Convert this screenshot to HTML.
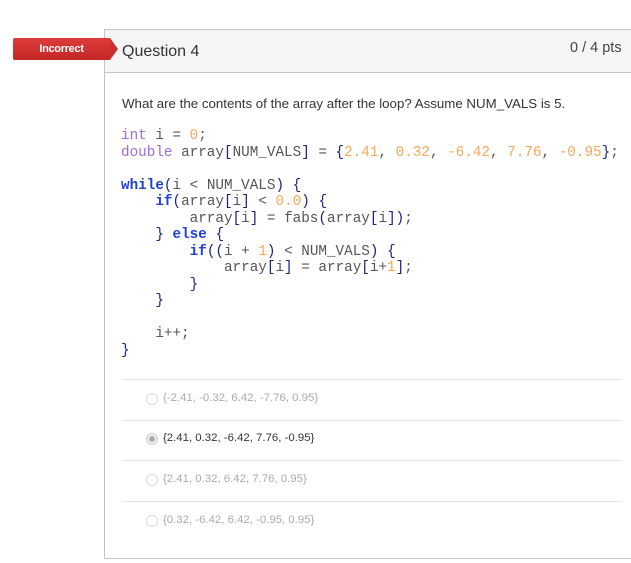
<!DOCTYPE html>
<html><head><style>
body{margin:0;width:631px;height:563px;background:#fff;position:relative;overflow:hidden;font-family:"Liberation Sans",sans-serif;}
.box{position:absolute;left:104px;top:29px;width:540px;height:528px;border:1px solid #c4c4c4;border-right:none;}
.hdr{position:absolute;left:0;top:0;right:0;height:42px;background:#f5f5f5;border-bottom:1px solid #c4c4c4;}
.tag{position:absolute;left:13px;top:38px;width:97px;height:22px;background:linear-gradient(#dc3b3b,#c42727);color:#fff;font-size:11px;font-weight:bold;line-height:22px;text-align:center;border-radius:2px 0 0 2px;letter-spacing:-0.3px}
.tag:after{content:"";position:absolute;right:-8px;top:0;border-left:8px solid #c93030;border-top:11px solid transparent;border-bottom:11px solid transparent;}
.t{position:absolute;white-space:pre;}
.code{position:absolute;left:121px;font-family:"Liberation Mono",monospace;font-size:14.3px;line-height:16.5px;color:#555;white-space:pre;}
.k{color:#9a6be0}.b{color:#2040d0;font-weight:bold}.n{color:#f5a858}.p{color:#1a237e}
.sep{position:absolute;left:122px;width:500px;height:1px;background:#e2e2e2}
.r{position:absolute;left:146px;width:10px;height:10px;border:1px solid #ddd;border-radius:50%;background:#fff}
.a{position:absolute;left:163px;font-size:11.4px;color:#aaa;white-space:pre}
</style></head><body>
<div class="box"><div class="hdr"></div></div>
<div class="tag">Incorrect</div>
<div class="t" style="left:122px;top:43px;font-size:16px;color:#333">Question 4</div>
<div class="t" style="left:570px;top:40px;font-size:14.5px;color:#444">0 / 4 pts</div>
<div class="t" style="left:122px;top:96px;font-size:13.3px;color:#333">What are the contents of the array after the loop? Assume NUM_VALS is 5.</div>
<div class="code" style="top:128px"><span class="k">int</span> i = <span class="n">0</span>;
<span class="k">double</span> array<span class="p">[</span>NUM_VALS<span class="p">]</span> = <span class="p">{</span><span class="n">2.41</span>, <span class="n">0.32</span>, <span class="n">-6.42</span>, <span class="n">7.76</span>, <span class="n">-0.95</span><span class="p">}</span>;

<span class="b">while</span><span class="p">(</span>i &lt; NUM_VALS<span class="p">)</span> <span class="p">{</span>
    <span class="b">if</span><span class="p">(</span>array<span class="p">[</span>i<span class="p">]</span> &lt; <span class="n">0.0</span><span class="p">)</span> <span class="p">{</span>
        array<span class="p">[</span>i<span class="p">]</span> = fabs<span class="p">(</span>array<span class="p">[</span>i<span class="p">])</span>;
    <span class="p">}</span> <span class="b">else</span> <span class="p">{</span>
        <span class="b">if</span><span class="p">((</span>i + <span class="n">1</span><span class="p">)</span> &lt; NUM_VALS<span class="p">)</span> <span class="p">{</span>
            array<span class="p">[</span>i<span class="p">]</span> = array<span class="p">[</span>i+<span class="n">1</span><span class="p">]</span>;
        <span class="p">}</span>
    <span class="p">}</span>

    i++;
<span class="p">}</span></div>
<div class="sep" style="top:379px"></div>
<div class="sep" style="top:420px"></div>
<div class="sep" style="top:460px"></div>
<div class="sep" style="top:501px"></div>
<div class="r" style="top:393px"></div><div class="a" style="top:392px">{-2.41, -0.32, 6.42, -7.76, 0.95}</div>
<div class="r" style="top:433px;background:radial-gradient(#aaa 35%,#eee 45%);border-color:#ccc"></div><div class="a" style="top:432px;color:#333">{2.41, 0.32, -6.42, 7.76, -0.95}</div>
<div class="r" style="top:474px"></div><div class="a" style="top:473px">{2.41, 0.32, 6.42, 7.76, 0.95}</div>
<div class="r" style="top:515px"></div><div class="a" style="top:514px">{0.32, -6.42, 6.42, -0.95, 0.95}</div>
</body></html>
